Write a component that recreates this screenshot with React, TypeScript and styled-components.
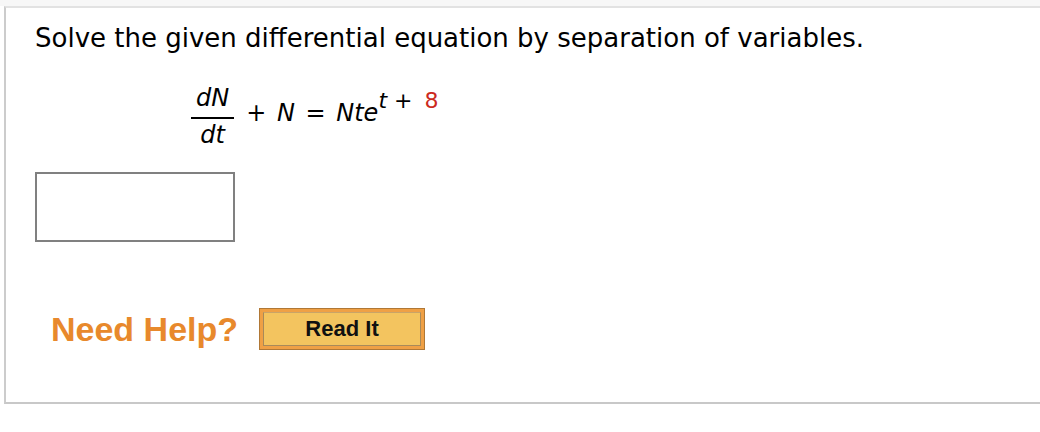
import React from 'react';
import styled, { createGlobalStyle } from 'styled-components';

const GlobalStyle = createGlobalStyle`
	html, body {
		margin: 0;
		padding: 0;
		background: #fff;
	}
`;

const Page = styled.div`
	width: 1040px;
	height: 432px;
	overflow: hidden;
	background: linear-gradient(#f7f7f7 0 6px, #fff 6px);
	padding-top: 6px;
	box-sizing: border-box;
`;

const Panel = styled.div`
	margin-left: 4px;
	width: 1100px;
	height: 398px;
	box-sizing: border-box;
	background: #fff;
	border-top: 2px solid #e2e2e2;
	border-left: 2px solid #cccccc;
	border-bottom: 2px solid #c8c8c8;
	padding: 15px 0 0 29px;
	font-family: 'DejaVu Sans', Verdana, sans-serif;
	color: #000;
`;

const Prompt = styled.p`
	margin: 0;
	font-size: 26px;
	line-height: 30px;
	white-space: nowrap;
`;

const Equation = styled.div`
	display: flex;
	align-items: center;
	margin: 31px 0 0 156px;
	font-size: 24px;
	font-style: italic;
`;

const Fraction = styled.span`
	display: inline-flex;
	flex-direction: column;
	align-items: center;
	margin-right: 12px;
`;

const Numerator = styled.span`
	padding: 0 5px 5px;
	border-bottom: 2px solid #000;
	line-height: 28px;
`;

const Denominator = styled.span`
	line-height: 30px;
	padding-top: 1px;
`;

const Expression = styled.span`
	line-height: 30px;
	padding-bottom: 8px;
	white-space: pre;
	word-spacing: 3px;
`;

const Upright = styled.span`
	font-style: normal;
`;

const Sup = styled.sup`
	font-size: 22px;
	vertical-align: 13px;
	line-height: 0;
	word-spacing: 0;
`;

const Red = styled.span<{ $gap?: number }>`
	font-style: normal;
	color: #cc2a1e;
	margin-left: ${({ $gap }) => $gap ?? 0}px;
`;

const AnswerBox = styled.input`
	display: block;
	margin-top: 22px;
	width: 200px;
	height: 70px;
	box-sizing: border-box;
	border: 2px solid #808080;
	background: #fff;
	padding: 0;
	outline: none;
`;

const HelpRow = styled.div`
	display: flex;
	align-items: center;
	margin: 66px 0 0 16px;
	gap: 21px;
`;

const HelpLabel = styled.span`
	font-family: 'Liberation Sans', Arial, sans-serif;
	font-weight: bold;
	font-size: 34px;
	color: #e8892c;
	white-space: nowrap;
`;

const ReadButton = styled.button`
	width: 166px;
	height: 42px;
	box-sizing: border-box;
	padding: 3px;
	border: 1px solid #b07836;
	background: #efa045;
	cursor: pointer;
`;

const ReadButtonFace = styled.span`
	display: flex;
	align-items: center;
	justify-content: center;
	height: 100%;
	box-sizing: border-box;
	border: 1px solid #a88a5a;
	border-top-color: #c9a468;
	background: #f3c45f;
	font-family: 'Liberation Sans', Arial, sans-serif;
	font-weight: bold;
	font-size: 22px;
	color: #111;
`;

function App(): JSX.Element {
	return (
		<>
			<GlobalStyle />
			<Page>
				<Panel>
					<Prompt>Solve the given differential equation by separation of variables.</Prompt>
					<Equation>
						<Fraction>
							<Numerator>dN</Numerator>
							<Denominator>dt</Denominator>
						</Fraction>
						<Expression>
							<Upright>+</Upright> N <Upright>=</Upright> Nte
							<Sup>
								t <Upright>+</Upright> <Red $gap={5}>8</Red>
							</Sup>
						</Expression>
					</Equation>
					<AnswerBox type="text" aria-label="answer" />
					<HelpRow>
						<HelpLabel>Need Help?</HelpLabel>
						<ReadButton type="button">
							<ReadButtonFace>Read It</ReadButtonFace>
						</ReadButton>
					</HelpRow>
				</Panel>
			</Page>
		</>
	);
}

export default App;
